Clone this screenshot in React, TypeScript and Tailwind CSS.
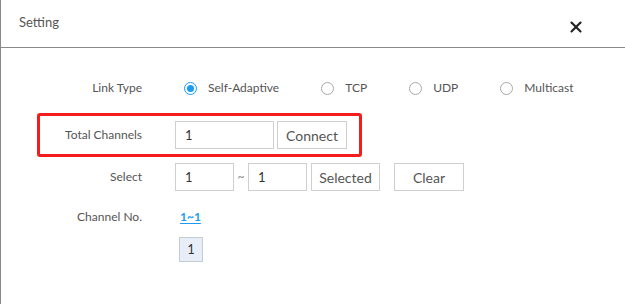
import { X } from 'lucide-react';

const font = { fontFamily: 'Lato, "Noto Sans", sans-serif' };

const Radio = ({ checked, label }: { checked?: boolean; label: string }) => (
  <label className="flex items-center gap-[11px] mr-[42px]">
    {checked ? (
      <span className="w-[13px] h-[13px] rounded-full border border-[#1a9cf2] flex items-center justify-center">
        <span className="w-[7px] h-[7px] rounded-full bg-[#1a9cf2]" />
      </span>
    ) : (
      <span className="w-[13px] h-[13px] rounded-full border border-[#a9a9a9]" />
    )}
    <span>{label}</span>
  </label>
);

const Row = ({ label, children, className = '' }: { label: string; children: React.ReactNode; className?: string }) => (
  <div className={`flex items-center ${className}`}>
    <div className="w-[141px] text-right text-[#555]">{label}</div>
    <div className="ml-[33px] flex items-center">{children}</div>
  </div>
);

const Button = ({ children, className = '' }: { children: React.ReactNode; className?: string }) => (
  <button className={`h-[28px] border border-[#cfcfcf] bg-white text-[14px] text-[#555] ${className}`}>
    {children}
  </button>
);

export default function App() {
  return (
    <div className="w-[625px] h-[304px] bg-white border-l border-[#8a8a8a] text-[12px] text-[#555]" style={font}>
      {/* Header */}
      <div className="h-[48px] border-b border-[#8a8a8a] flex items-start justify-between pl-[18px] pr-[40px] pt-[13px]">
        <span className="text-[13px] text-[#555]">Setting</span>
        <X className="w-[18px] h-[18px] mt-[5px] text-[#222]" strokeWidth={2.8} />
      </div>

      <div className="pt-[26px]">
        <Row label="Link Type" className="h-[28px]">
          <div className="flex items-center ml-[9px]">
            <Radio checked label="Self-Adaptive" />
            <Radio label="TCP" />
            <Radio label="UDP" />
            <Radio label="Multicast" />
          </div>
        </Row>

        <div className="relative mt-[19px]">
          <Row label="Total Channels" className="h-[28px]">
            <input
              readOnly
              value="1"
              className="w-[99px] h-[28px] border border-[#cfcfcf] px-[9px] text-[13px] text-[#333] outline-none"
            />
            <Button className="ml-[3px] w-[70px]">Connect</Button>
          </Row>
          <div className="absolute left-[36px] top-[-8px] w-[325px] h-[44px] border-[3px] border-[#f41c1c] rounded-[3px] pointer-events-none" />
        </div>

        <Row label="Select" className="h-[28px] mt-[14px]">
          <input
            readOnly
            value="1"
            className="w-[59px] h-[28px] border border-[#cfcfcf] px-[9px] text-[13px] text-[#333] outline-none"
          />
          <span className="w-[14px] text-center text-[#888]">~</span>
          <input
            readOnly
            value="1"
            className="w-[59px] h-[28px] border border-[#cfcfcf] px-[9px] text-[13px] text-[#333] outline-none"
          />
          <Button className="ml-[4px] w-[69px]">Selected</Button>
          <Button className="ml-[14px] w-[70px]">Clear</Button>
        </Row>

        <Row label="Channel No." className="h-[28px] mt-[12px]">
          <a className="ml-[5px] font-bold text-[#1a9cf2] underline underline-offset-2">1~1</a>
        </Row>

        <div className="ml-[178px] mt-[6px] w-[24px] h-[25px] bg-[#e7eef8] border border-[#c6ccd4] flex items-center justify-center text-[13px] text-[#333]">
          1
        </div>
      </div>
    </div>
  );
}
